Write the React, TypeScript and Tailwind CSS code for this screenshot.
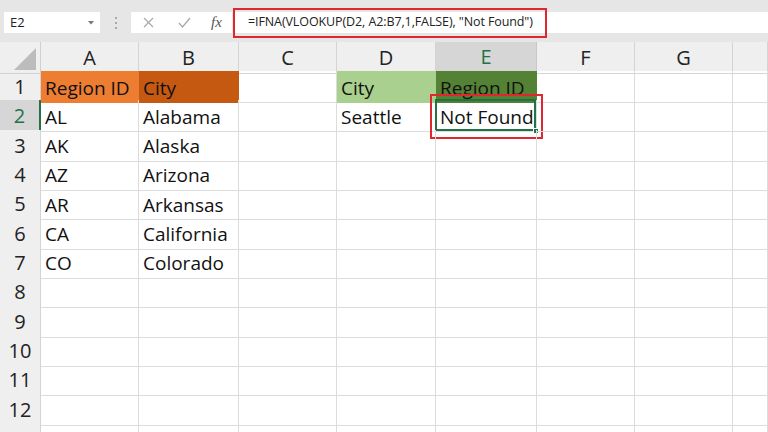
import React from 'react'

const COLS = ['A', 'B', 'C', 'D', 'E', 'F', 'G', '']
const GRID = 'grid grid-cols-[41px_98px_100px_98px_99px_101px_98px_98px_1fr]'

type Cell = { text?: string; fill?: string }

const rows: Cell[][] = [
  [
    { text: 'Region ID', fill: 'bg-[#ed7d31]' },
    { text: 'City', fill: 'bg-[#c65911]' },
    {},
    { text: 'City', fill: 'bg-[#a9d08e]' },
    { text: 'Region ID', fill: 'bg-[#548235]' },
  ],
  [{ text: 'AL' }, { text: 'Alabama' }, {}, { text: 'Seattle' }, { text: 'Not Found' }],
  [{ text: 'AK' }, { text: 'Alaska' }],
  [{ text: 'AZ' }, { text: 'Arizona' }],
  [{ text: 'AR' }, { text: 'Arkansas' }],
  [{ text: 'CA' }, { text: 'California' }],
  [{ text: 'CO' }, { text: 'Colorado' }],
  [], [], [], [], [], [],
]

function FormulaBar() {
  return (
    <div className="relative flex h-[42px] items-start bg-[#e6e6e6] pt-[12px] pl-[4px]">
      <div className="flex h-[21px] w-[96px] items-center justify-between bg-white pl-[6px] pr-[6px] text-[13px] text-[#222]">
        <span>E2</span>
        <svg width="6" height="4" viewBox="0 0 6 4"><path d="M0 0h6L3 3.5z" fill="#777" /></svg>
      </div>
      <div className="flex w-[31px] flex-col items-center justify-center gap-[3px] h-[21px]">
        <span className="h-[2px] w-[2px] bg-[#aaa]" />
        <span className="h-[2px] w-[2px] bg-[#aaa]" />
        <span className="h-[2px] w-[2px] bg-[#aaa]" />
      </div>
      <div className="flex h-[21px] w-[101px] items-center bg-white">
        <svg className="ml-[12px]" width="11" height="11" viewBox="0 0 11 11">
          <path d="M1 1l9 9M10 1l-9 9" stroke="#a8a8a8" strokeWidth="1.2" fill="none" />
        </svg>
        <svg className="ml-[24px]" width="13" height="11" viewBox="0 0 13 11">
          <path d="M1 6l3.5 4L12 1" stroke="#a8a8a8" strokeWidth="1.3" fill="none" />
        </svg>
        <span className="ml-[20px] font-['Liberation_Serif'] text-[15px] italic text-[#555]">fx</span>
      </div>
      <div className="ml-[2px] flex h-[21px] flex-1 items-center bg-white pl-[14px] text-[12.5px] tracking-[-0.1px] text-[#222]">
        =IFNA(VLOOKUP(D2, A2:B7,1,FALSE), "Not Found")
      </div>
      <div className="pointer-events-none absolute left-[233px] top-[8px] h-[30px] w-[314px] border-2 border-[#e0262e]" />
    </div>
  )
}

export default function App() {
  return (
    <div className="relative h-[432px] w-[768px] overflow-hidden bg-white font-['Open_Sans',sans-serif]">
      <FormulaBar />
      <div className={`${GRID} h-[29px] bg-[#efefef]`}>
        <div className="relative border-r border-b border-[#d0d0d0]">
          <svg className="absolute right-[4px] bottom-[3px]" width="22" height="22" viewBox="0 0 22 22">
            <path d="M22 0V22H0z" fill="#bcbcbc" />
          </svg>
        </div>
        {COLS.map((c, i) =>
          c === 'E' ? (
            <div key={i} className="flex items-center justify-center border-r border-b-2 border-r-[#c8c8c8] border-b-[#217346] bg-[#d6d6d6] text-[20px] text-[#217346]">
              {c}
            </div>
          ) : (
            <div key={i} className="flex items-center justify-center border-r border-b border-[#d4d4d4] text-[20px] text-[#222]">
              {c}
            </div>
          )
        )}
      </div>
      {rows.map((row, r) => (
        <div key={r} className={`${GRID} h-[29.33px]`}>
          {r === 1 ? (
            <div className="flex items-center justify-center border-r-2 border-b border-r-[#217346] border-b-[#c8c8c8] bg-[#d6d6d6] pt-[1px] text-[20px] text-[#217346]">
              {r + 1}
            </div>
          ) : (
            <div className="flex items-center justify-center border-r border-b border-[#d4d4d4] bg-[#efefef] pt-[1px] text-[20px] text-[#222]">
              {r < 12 ? r + 1 : ''}
            </div>
          )}
          {COLS.map((_, c) => {
            const cell = row[c] ?? {}
            const active = r === 1 && c === 4
            return (
              <div
                key={c}
                className={`relative flex items-center overflow-visible whitespace-nowrap pl-[4px] pt-[2px] text-[19px] text-[#111] ${cell.fill ?? 'border-r border-b border-[#dcdcdc]'}`}
              >
                {cell.text}
                {active && (
                  <>
                    <div className="pointer-events-none absolute -left-[1px] -top-[1px] right-0 bottom-0 border-2 border-[#217346]" />
                    <div className="pointer-events-none absolute -right-[3px] -bottom-[3px] h-[6px] w-[6px] border border-white bg-[#217346]" />
                    <div className="pointer-events-none absolute -left-[6px] -top-[6px] -right-[7px] -bottom-[8px] border-2 border-[#e0262e]" />
                  </>
                )}
              </div>
            )
          })}
        </div>
      ))}
    </div>
  )
}
